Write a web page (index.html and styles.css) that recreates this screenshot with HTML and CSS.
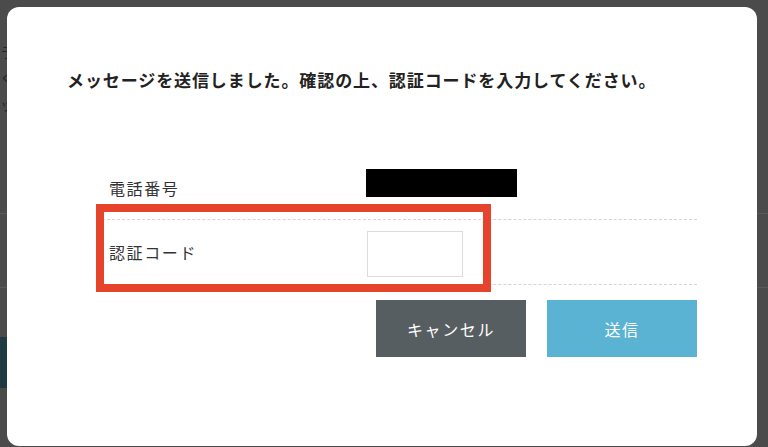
FILE: index.html
```html
<!DOCTYPE html>
<html lang="ja">
<head>
<meta charset="utf-8">
<title>認証コード入力</title>
<link rel="stylesheet" href="styles.css">
</head>
<body>
<div class="page">
  <div class="page-text">
    <p>ラ</p>
    <p>ぐ</p>
    <p>ッ</p>
  </div>
  <div class="page-rule rule-a"></div>
  <div class="page-rule rule-b"></div>
  <div class="page-band"></div>
</div>

<div class="overlay">
  <div class="modal">
    <p class="message">メッセージを送信しました。確認の上、認証コードを入力してください。</p>
    <div class="form">
      <div class="row row-phone">
        <div class="label">電話番号</div>
        <div class="value"><span class="redacted"></span></div>
      </div>
      <div class="row row-code">
        <div class="label">認証コード</div>
        <div class="value"><input class="code-input" type="text" aria-label="認証コード"></div>
      </div>
      <div class="highlight"></div>
      <div class="actions">
        <button class="btn btn-cancel" type="button">キャンセル</button>
        <button class="btn btn-submit" type="button">送信</button>
      </div>
    </div>
  </div>
</div>
</body>
</html>
```

FILE: styles.css
```css
* { box-sizing: border-box; }

html, body {
  margin: 0;
  width: 768px;
  height: 447px;
  overflow: hidden;
}

body {
  background: #4b4b4b;
  font-family: "Noto Sans CJK JP", "Noto Sans", sans-serif;
  color: #333;
  position: relative;
}

/* background page (dimmed) */
.page {
  padding-top: 40px;
}
.page-text {
  width: 20px;
  color: #262626;
  font-size: 15px;
  line-height: 24px;
}
.page-text p { margin: 0 0 2px 0; }
.page-rule {
  height: 1px;
  background: #5a5a5a;
}
.rule-a { margin-top: 97px; }
.rule-b { margin-top: 73px; }
.page-band {
  margin-top: 49px;
  width: 300px;
  height: 51px;
  background: #1f3a42;
}

/* modal overlay */
.overlay {
  position: absolute;
  inset: 0;
  padding: 7px 11px 1px 7px;
  display: flex;
}
.modal {
  flex: 1;
  background: #fff;
  border-radius: 12px;
  padding-top: 61px;
}

.message {
  margin: 0 0 0 60px;
  font-size: 17px;
  line-height: 24px;
  letter-spacing: 0.9px;
  font-weight: 700;
  color: #222;
}

.form {
  position: relative;
  width: 600px;
  margin: 61px 0 0 90px;
}

.row {
  display: flex;
  align-items: center;
  height: 66px;
}
.row-code {
  border-top: 1px dashed #d4d4d4;
  border-bottom: 1px dashed #d4d4d4;
}
.label {
  width: 270px;
  padding-left: 12px;
  font-size: 16px;
  letter-spacing: 0.1em;
  color: #333;
}
.row-phone .label { padding-top: 4px; }
.row-phone .value { padding-bottom: 6px; }

.redacted {
  display: block;
  width: 151px;
  height: 28px;
  background: #000;
  margin-left: -1px;
}
.code-input {
  display: block;
  width: 96px;
  height: 46px;
  border: 1px solid #dcdcdc;
  background: #fff;
  margin: 3px 0 0 0;
  padding: 0;
  outline: none;
}

.highlight {
  position: absolute;
  left: -1px;
  top: 51px;
  width: 395px;
  height: 88px;
  border: 8px solid #e5432b;
  pointer-events: none;
}

.actions {
  display: flex;
  justify-content: flex-end;
  gap: 21px;
  margin-top: 15px;
}
.btn {
  width: 150px;
  height: 57px;
  border: 0;
  border-radius: 0;
  color: #fff;
  font-family: inherit;
  font-size: 16px;
  letter-spacing: 0.1em;
  padding: 0;
}
.btn-cancel { background: #575e61; }
.btn-submit { background: #5ab3d3; }
```
